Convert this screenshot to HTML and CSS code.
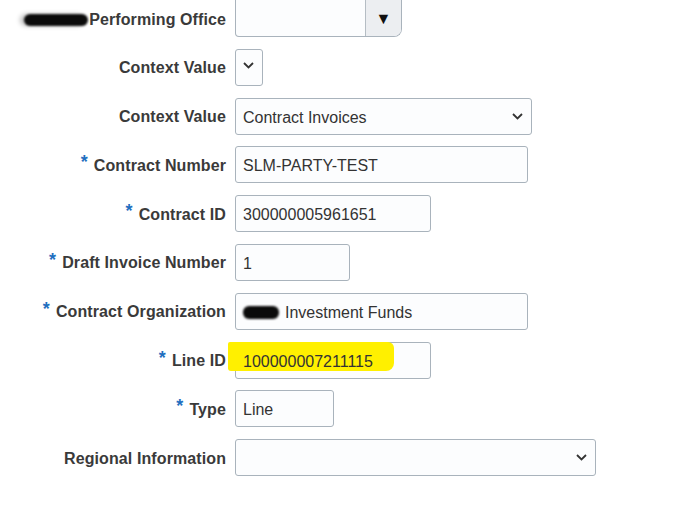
FILE: index.html
```html
<!DOCTYPE html>
<html>
<head>
<meta charset="utf-8">
<link rel="stylesheet" href="styles.css">
</head>
<body>
<div class="form">
  <div class="label"><span class="redact redact-label"></span>Performing Office</div>
  <div class="field">
    <div class="combo">
      <div class="combo-text"></div>
      <div class="combo-btn">&#9660;</div>
    </div>
  </div>

  <div class="label">Context Value</div>
  <div class="field"><div class="box select w28"><svg class="chev" width="11" height="7" viewBox="0 0 11 7"><polyline points="1,1 5.5,5.5 10,1" fill="none" stroke="#333" stroke-width="1.8"/></svg></div></div>

  <div class="label">Context Value</div>
  <div class="field"><div class="box select w297"><span class="val">Contract Invoices</span><svg class="chev" width="11" height="7" viewBox="0 0 11 7"><polyline points="1,1 5.5,5.5 10,1" fill="none" stroke="#333" stroke-width="1.8"/></svg></div></div>

  <div class="label"><span class="req">*</span>Contract Number</div>
  <div class="field"><div class="box w293"><span class="val">SLM-PARTY-TEST</span></div></div>

  <div class="label"><span class="req">*</span>Contract ID</div>
  <div class="field"><div class="box w196"><span class="val">300000005961651</span></div></div>

  <div class="label"><span class="req">*</span>Draft Invoice Number</div>
  <div class="field"><div class="box w115"><span class="val">1</span></div></div>

  <div class="label"><span class="req">*</span>Contract Organization</div>
  <div class="field"><div class="box w293"><span class="redact redact-org"></span><span class="val">Investment Funds</span></div></div>

  <div class="label"><span class="req">*</span>Line ID</div>
  <div class="field"><div class="box w196"><span class="highlight"></span><span class="val on-top">100000007211115</span></div></div>

  <div class="label"><span class="req">*</span>Type</div>
  <div class="field"><div class="box w99"><span class="val">Line</span></div></div>

  <div class="label">Regional Information</div>
  <div class="field"><div class="box select w361"><span class="val"></span><svg class="chev" width="11" height="7" viewBox="0 0 11 7"><polyline points="1,1 5.5,5.5 10,1" fill="none" stroke="#333" stroke-width="1.8"/></svg></div></div>
</div>
</body>
</html>
```

FILE: styles.css
```css
html, body {
  margin: 0;
  padding: 0;
  background: #ffffff;
}

body {
  font-family: "Liberation Sans", Arial, sans-serif;
  color: #333333;
  width: 696px;
  height: 505px;
  overflow: hidden;
}

.form {
  display: grid;
  grid-template-columns: 226px auto;
  grid-auto-rows: 37px;
  column-gap: 9px;
  row-gap: 11.8px;
  justify-content: start;
}

.label {
  display: flex;
  align-items: center;
  justify-content: flex-end;
  padding-top: 2px;
  font-size: 16px;
  font-weight: bold;
  letter-spacing: 0.1px;
  color: #3a3a3a;
  white-space: nowrap;
}

.req {
  color: #1f6fc0;
  font-size: 18px;
  margin-right: 6px;
  position: relative;
  top: -3px;
}

.field {
  display: flex;
  align-items: stretch;
}

.box {
  position: relative;
  box-sizing: border-box;
  height: 37px;
  border: 1px solid #a9b3bc;
  border-radius: 3px;
  background: #fcfdfe;
  display: flex;
  align-items: center;
  padding: 3px 7px 0;
  font-size: 16px;
  color: #333333;
}

.select {
  justify-content: space-between;
}

.w28 { width: 28px; padding: 0; justify-content: center; }
.w297 { width: 297px; }
.w293 { width: 293px; }
.w196 { width: 196px; }
.w115 { width: 115px; }
.w99 { width: 99px; }
.w361 { width: 361px; }

.select .chev {
  margin-right: 1px;
  margin-top: -3px;
}

.combo {
  box-sizing: border-box;
  width: 167px;
  height: 37px;
  border: 1px solid #a9b3bc;
  border-top: none;
  border-radius: 0 0 8px 4px;
  display: flex;
  background: #fcfdfe;
  overflow: hidden;
}

.combo-text {
  flex: 1;
}

.combo-btn {
  width: 35px;
  border-left: 1px solid #b5bdc4;
  background: #eceef1;
  display: flex;
  align-items: center;
  justify-content: center;
  font-size: 16px;
  color: #111;
  padding-top: 1px;
}

.redact {
  display: inline-block;
  background: #0a0a0a;
  border-radius: 6px;
  filter: blur(0.8px);
}

.redact-label {
  width: 64px;
  height: 12px;
  margin-right: 1px;
  box-shadow: -4px 0 4px rgba(0,0,0,0.25);
}

.redact-org {
  width: 36px;
  height: 13px;
  margin-right: 6px;
}

.highlight {
  position: absolute;
  left: -8px;
  top: -1px;
  width: 166px;
  height: 29px;
  background: #fff000;
  border-radius: 2px 6px 8px 3px;
  filter: blur(0.6px);
}

.on-top {
  position: relative;
}
```
